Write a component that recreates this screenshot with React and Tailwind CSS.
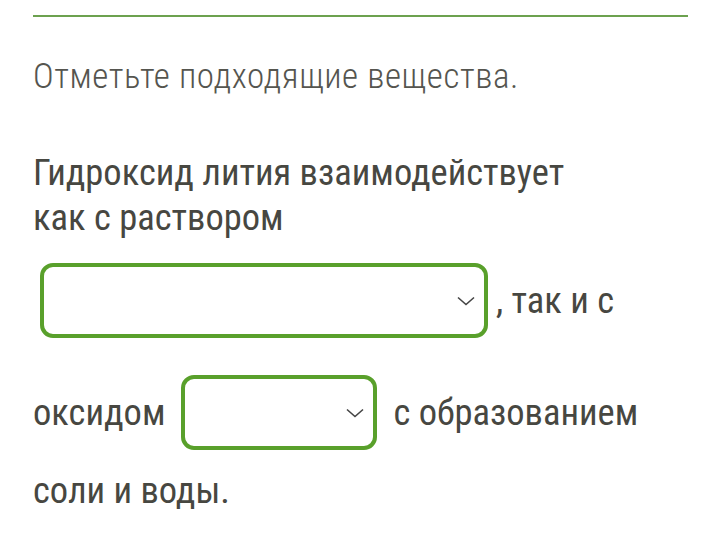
const Chevron = () => (
  <svg width="18" height="10" viewBox="0 0 18 10" fill="none" className="shrink-0">
    <path d="M1 1.5 L9 8.5 L17 1.5" stroke="#444" strokeWidth="1.6" />
  </svg>
);

const SelectBox = ({ className }) => (
  <div
    className={`h-[75px] rounded-[13px] border-4 border-[#59a02b] bg-white flex items-center justify-end pr-[9px] ${className}`}
  >
    <Chevron />
  </div>
);

export default function App() {
  return (
    <div className="min-h-[541px] bg-white px-[33px] pt-[15px] font-['Roboto',sans-serif] [font-stretch:condensed]">
      {/* green rule */}
      <div className="w-[655px] h-[2px] bg-[#6ca14f]" />

      <p className="mt-[40px] text-[35px] leading-[40px] tracking-[0.6px] font-light text-[#55554f]">
        Отметьте подходящие вещества.
      </p>

      <div className="mt-[53px] text-[36.5px] leading-[45px] text-[#474741]">
        <p>
          Гидроксид лития взаимодействует
          <br />
          как с раствором
        </p>

        <div className="mt-[23px] flex items-center">
          <SelectBox className="ml-[7px] w-[448px]" />
          <span className="ml-[8px]">, так и с</span>
        </div>

        <div className="mt-[37px] flex items-center">
          <span>оксидом</span>
          <SelectBox className="ml-[15px] w-[196px]" />
          <span className="ml-[17px]">с образованием</span>
        </div>

        <p className="mt-[18px]">соли и воды.</p>
      </div>
    </div>
  );
}
